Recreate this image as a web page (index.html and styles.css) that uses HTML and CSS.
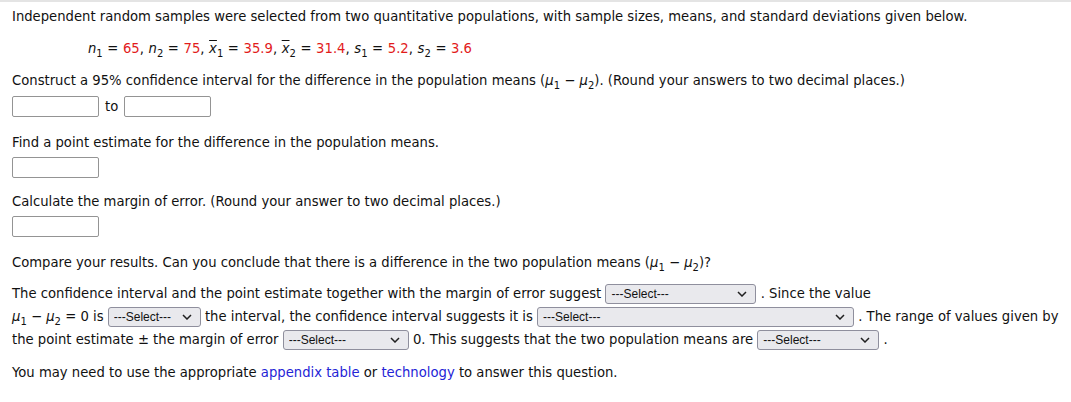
FILE: index.html
```html
<!DOCTYPE html>
<html>
<head>
<meta charset="utf-8">
<link rel="stylesheet" href="styles.css">
</head>
<body>
<div class="page">
  <p class="intro">Independent random samples were selected from two quantitative populations, with sample sizes, means, and standard deviations given below.</p>
  <p class="formula"><i>n</i><sub>1</sub> = <span class="val">65</span>, <i>n</i><sub>2</sub> = <span class="val">75</span>, <span class="xbar"><i>x</i></span><sub>1</sub> = <span class="val">35.9</span>, <span class="xbar"><i>x</i></span><sub>2</sub> = <span class="val">31.4</span>, <i>s</i><sub>1</sub> = <span class="val">5.2</span>, <i>s</i><sub>2</sub> = <span class="val">3.6</span></p>
  <p class="q q1">Construct a 95% confidence interval for the difference in the population means (<i class="mu">μ</i><sub>1</sub> − <i class="mu">μ</i><sub>2</sub>). (Round your answers to two decimal places.)</p>
  <div class="answer-row row1">
    <input class="ans" type="text">
    <span class="to">to</span>
    <input class="ans" type="text">
  </div>
  <p class="q q2">Find a point estimate for the difference in the population means.</p>
  <div class="answer-row row2">
    <input class="ans" type="text">
  </div>
  <p class="q q3">Calculate the margin of error. (Round your answer to two decimal places.)</p>
  <div class="answer-row row3">
    <input class="ans" type="text">
  </div>
  <p class="q q4">Compare your results. Can you conclude that there is a difference in the two population means (<i class="mu">μ</i><sub>1</sub> − <i class="mu">μ</i><sub>2</sub>)?</p>
  <p class="conclude">The confidence interval and the point estimate together with the margin of error suggest <select class="sel sel-a"><option>---Select---</option></select> . Since the value<br><i class="mu">μ</i><sub>1</sub> − <i class="mu">μ</i><sub>2</sub> = 0 is <select class="sel sel-b"><option>---Select---</option></select> the interval, the confidence interval suggests it is <select class="sel sel-c"><option>---Select---</option></select> . The range of values given by<br>the point estimate ± the margin of error <select class="sel sel-d"><option>---Select---</option></select> 0. This suggests that the two population means are <select class="sel sel-e"><option>---Select---</option></select> .</p>
  <p class="note">You may need to use the appropriate <a href="#">appendix table</a> or <a href="#">technology</a> to answer this question.</p>
</div>
</body>
</html>
```
FILE: styles.css
```css
html, body {
  margin: 0;
  padding: 0;
  background: #fff;
}

.page {
  border-top: 2px solid #e4e4e4;
  padding: 5px 12px 0 12px;
  font-family: "DejaVu Sans", Verdana, sans-serif;
  font-size: 13.2px;
  color: #111;
}

p {
  margin: 0;
  line-height: 20px;
  white-space: nowrap;
}

sub {
  font-size: 10px;
  vertical-align: -4px;
  line-height: 0;
}

.formula {
  margin-top: 12px;
  padding-left: 76px;
  word-spacing: 0.4px;
}

.val {
  color: #e21b1b;
}

.xbar {
  text-decoration: overline;
}

.q1 { margin-top: 12px; }
.q2 { margin-top: 16px; }
.q3 { margin-top: 14px; }
.q4 { margin-top: 16px; }

.answer-row {
  display: flex;
  align-items: center;
  gap: 6px;
  height: 21px;
}

.row1 { margin-top: 5px; }
.row2 { margin-top: 4px; }
.row3 { margin-top: 4px; }

.ans {
  box-sizing: border-box;
  width: 87px;
  height: 21px;
  margin: 0;
  border: 1px solid #949494;
  border-radius: 2px;
  background: #fff;
  padding: 0 4px;
}

.to {
  line-height: 21px;
}

.conclude {
  margin-top: 9px;
  line-height: 23px;
}

.sel {
  -webkit-appearance: none;
  appearance: none;
  box-sizing: border-box;
  height: 20px;
  margin: 0;
  padding: 0 18px 0 5px;
  border: 1px solid #8f8f9d;
  border-radius: 3px;
  background-color: #e9e9ed;
  background-image: url("data:image/svg+xml;utf8,<svg xmlns='http://www.w3.org/2000/svg' width='10' height='6' viewBox='0 0 10 6'><path d='M1 1 L5 5 L9 1' fill='none' stroke='%23202020' stroke-width='1.5'/></svg>");
  background-repeat: no-repeat;
  background-position: right 8px center;
  font-family: "Liberation Sans", Arial, sans-serif;
  font-size: 12px;
  color: #111;
  vertical-align: middle;
}

.sel-a { width: 151px; }
.sel-b { width: 93px; }
.sel-c { width: 317px; }
.sel-d { width: 126px; }
.sel-e { width: 122px; }

.note {
  margin-top: 12px;
}

a {
  color: #2424d6;
  text-decoration: none;
}
```
